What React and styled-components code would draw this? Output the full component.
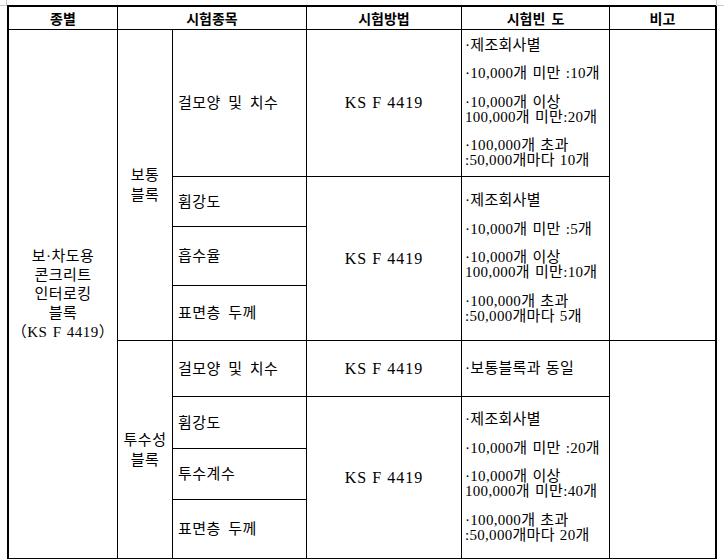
import React from 'react';
import styled, { createGlobalStyle } from 'styled-components';

const GlobalStyle = createGlobalStyle`
  html, body {
    margin: 0;
    background: #fff;
  }
  body {
    font-family: "Liberation Serif", "Noto Sans CJK KR", serif;
    color: #000;
  }
`;

const freqNormal = [
  ['·제조회사별'],
  ['·10,000개 미만 :10개'],
  ['·10,000개 이상', '100,000개 미만:20개'],
  ['·100,000개 초과', ':50,000개마다 10개'],
];

const freqNormalRest = [
  ['·제조회사별'],
  ['·10,000개 미만 :5개'],
  ['·10,000개 이상', '100,000개 미만:10개'],
  ['·100,000개 초과', ':50,000개마다 5개'],
];

const freqPermeable = [
  ['·제조회사별'],
  ['·10,000개 미만 :20개'],
  ['·10,000개 이상', '100,000개 미만:40개'],
  ['·100,000개 초과', ':50,000개마다 20개'],
];

const FreqList = ({ items }) => (
  <>
    {items.map((lines, i) => (
      <Para key={i}>
        {lines.map((l, j) => (
          <React.Fragment key={j}>
            {j > 0 && <br />}
            {l}
          </React.Fragment>
        ))}
      </Para>
    ))}
  </>
);

const App = () => {
  return (
    <Page>
      <GlobalStyle />
      <Table>
        <colgroup>
          <Col $w={109} />
          <Col $w={55} />
          <Col $w={134} />
          <Col $w={155} />
          <Col $w={148} />
          <Col $w={105} />
        </colgroup>
        <tbody>
          <Row $h={23}>
            <HeadCell>종별</HeadCell>
            <HeadCell colSpan={2}>시험종목</HeadCell>
            <HeadCell>시험방법</HeadCell>
            <HeadCell>시험빈 도</HeadCell>
            <HeadCell $last>비고</HeadCell>
          </Row>

          {/* 보통블록 */}
          <Row $h={147}>
            <KindCell rowSpan={8}>
              보·차도용<br />콘크리트<br />인터로킹<br />블록<br />（KS F 4419）
            </KindCell>
            <GroupCell rowSpan={4}>보통<br />블록</GroupCell>
            <ItemCell>걸모양 및 치수</ItemCell>
            <MethodCell>KS F 4419</MethodCell>
            <FreqCell><FreqList items={freqNormal} /></FreqCell>
            <NoteCell rowSpan={4} $last />
          </Row>
          <Row $h={50}>
            <ItemCell>휨강도</ItemCell>
            <MethodCell rowSpan={3}>KS F 4419</MethodCell>
            <FreqCell rowSpan={3}><FreqList items={freqNormalRest} /></FreqCell>
          </Row>
          <Row $h={59}>
            <ItemCell>흡수율</ItemCell>
          </Row>
          <Row $h={55}>
            <ItemCell>표면층 두께</ItemCell>
          </Row>

          {/* 투수성블록 */}
          <Row $h={56}>
            <GroupCell rowSpan={4}>투수성<br />블록</GroupCell>
            <ItemCell>걸모양 및 치수</ItemCell>
            <MethodCell>KS F 4419</MethodCell>
            <FreqCell><Para>·보통블록과 동일</Para></FreqCell>
            <NoteCell rowSpan={4} $last />
          </Row>
          <Row $h={52}>
            <ItemCell>휨강도</ItemCell>
            <MethodCell rowSpan={3}>KS F 4419</MethodCell>
            <FreqCell rowSpan={3}><FreqList items={freqPermeable} /></FreqCell>
          </Row>
          <Row $h={51}>
            <ItemCell>투수계수</ItemCell>
          </Row>
          <Row $h={59}>
            <ItemCell>표면층 두께</ItemCell>
          </Row>
        </tbody>
      </Table>
    </Page>
  );
};

export default App;

const Page = styled.div`
  position: relative;
  width: 724px;
  height: 560px;
  box-sizing: border-box;
  padding: 5px 0 0 7px;
  overflow: hidden;

  &::before {
    content: '';
    position: absolute;
    left: 0;
    top: 0;
    width: 6px;
    height: 5px;
    border-right: 1px solid #c8c8c8;
    border-bottom: 1px solid #c8c8c8;
  }

  &::after {
    content: '';
    position: absolute;
    left: 716px;
    top: 0;
    width: 8px;
    height: 5px;
    border-left: 1px solid #c8c8c8;
    border-bottom: 1px solid #c8c8c8;
  }
`;

const Table = styled.table`
  table-layout: fixed;
  border-collapse: separate;
  border-spacing: 0;
  border-left: 2px solid #000;
  border-top: 2px solid #000;
  border-right: 2px solid #000;
  width: 708px;
  font-size: 15px;
`;

const Col = styled.col`
  width: ${(p) => p.$w}px;
`;

const Row = styled.tr`
  height: ${(p) => p.$h}px;
`;

const Cell = styled.td`
  box-sizing: border-box;
  padding: 0;
  border-bottom: 1px solid #000;
  border-right: ${(p) => (p.$last ? 'none' : '1px solid #000')};
  vertical-align: middle;
  white-space: nowrap;
  overflow: hidden;
`;

const HeadCell = styled(Cell)`
  text-align: center;
  font-family: "Noto Sans CJK KR", sans-serif;
  font-weight: 700;
  font-size: 14px;
  line-height: 16px;
  word-spacing: 3px;
`;

const KindCell = styled(Cell)`
  text-align: center;
  line-height: 19px;
  letter-spacing: 0.5px;
  word-spacing: 1px;
`;

const GroupCell = styled(Cell)`
  text-align: center;
  line-height: 20px;
  letter-spacing: 0.5px;
`;

const ItemCell = styled(Cell)`
  text-align: left;
  padding-left: 5px;
  line-height: 18px;
  letter-spacing: 0.5px;
  word-spacing: 3px;
`;

const MethodCell = styled(Cell)`
  text-align: center;
  font-size: 16px;
  letter-spacing: 1px;
  line-height: 18px;
`;

const FreqCell = styled(Cell)`
  text-align: left;
  padding-left: 3px;
  letter-spacing: 0.3px;
  word-spacing: 1px;
`;

const NoteCell = styled(Cell)``;

const Para = styled.p`
  margin: 0;
  line-height: 15px;

  & + & {
    margin-top: 13.5px;
  }
`;
